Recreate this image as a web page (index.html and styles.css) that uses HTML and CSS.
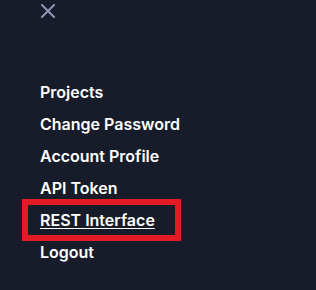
FILE: index.html
```html
<!DOCTYPE html>
<html>
<head>
<meta charset="utf-8">
<link rel="stylesheet" href="styles.css">
</head>
<body>
<div class="panel">
  <button class="close" aria-label="Close">
    <svg width="14" height="14" viewBox="0 0 14 14"><path d="M1 1L13 13M13 1L1 13" stroke="#8f97b3" stroke-width="2" stroke-linecap="square" fill="none"/></svg>
  </button>
  <ul class="menu">
    <li class="item"><a href="#">Projects</a></li>
    <li class="item"><a href="#">Change Password</a></li>
    <li class="item"><a href="#">Account Profile</a></li>
    <li class="item"><a href="#">API Token</a></li>
    <li class="item item-marked"><a href="#" class="underlined">REST Interface</a></li>
    <li class="item"><a href="#">Logout</a></li>
  </ul>
</div>
</body>
</html>
```
FILE: styles.css
```css
html, body {
  margin: 0;
  padding: 0;
  background: #171c2b;
}
.panel {
  width: 316px;
  height: 290px;
  background: #171c2b;
  font-family: "Inter", "Liberation Sans", sans-serif;
}
.close {
  display: block;
  margin: 0 0 0 41px;
  padding: 4px 0 0 0;
  border: 0;
  background: none;
  line-height: 0;
}
.menu {
  list-style: none;
  margin: 58px 0 0 0;
  padding: 0 0 0 40px;
}
.item {
  padding: 4px 0;
  line-height: 24px;
  font-size: 16px;
  font-weight: 600;
}
.item a {
  color: #ffffff;
  text-decoration: none;
}
.item a.underlined {
  text-decoration: underline;
  text-decoration-thickness: 1px;
  text-underline-offset: 2px;
}
.item-marked {
  position: relative;
}
.item-marked::after {
  content: "";
  position: absolute;
  left: -18px;
  top: -5px;
  width: 159px;
  height: 42px;
  border: 6px solid #e31b23;
  box-sizing: border-box;
}
```
